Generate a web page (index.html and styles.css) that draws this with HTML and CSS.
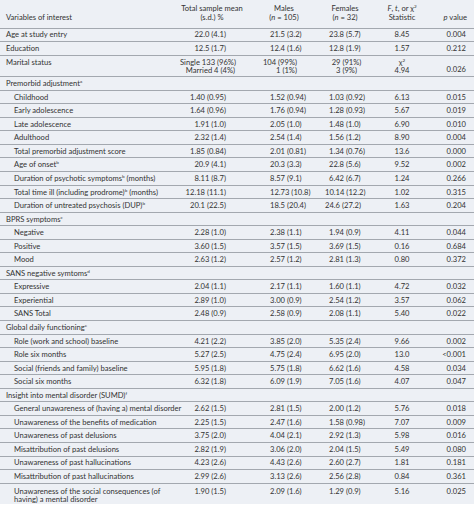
FILE: index.html
```html
<!DOCTYPE html>
<html>
<head>
<meta charset="utf-8">
<link rel="stylesheet" href="styles.css">
</head>
<body>
<table class="tbl">
<colgroup>
<col class="c1"><col class="c2"><col class="c3"><col class="c4"><col class="c5"><col class="c6">
</colgroup>
<thead>
<tr class="head">
<th class="lab">Variables of interest</th>
<th class="hc">Total sample mean<br>(s.d.) %</th>
<th class="hc">Males<br>(<i>n</i> = 105)</th>
<th class="hc">Females<br>(<i>n</i> = 32)</th>
<th class="hc"><i>F</i>, <i>t</i>, or χ<sup>2</sup><br>Statistic</th>
<th class="hp"><i>p</i> value</th>
</tr>
</thead>
<tbody>
<tr><td class="lab">Age at study entry</td><td class="tot">22.0 (4.1)</td><td class="mal">21.5 (3.2)</td><td class="fem">23.8 (5.7)</td><td class="st">8.45</td><td class="pv">0.004</td></tr>
<tr><td class="lab">Education</td><td class="tot">12.5 (1.7)</td><td class="mal">12.4 (1.6)</td><td class="fem">12.8 (1.9)</td><td class="st">1.57</td><td class="pv">0.212</td></tr>
<tr class="dbl"><td class="lab">Marital status</td><td class="tot mt">Single 133 (96%)<br>Married 4 (4%)</td><td class="mal mm">104 (99%)<br>1 (1%)</td><td class="fem mf">29 (91%)<br>3 (9%)</td><td class="st">χ<sup>2</sup><br>4.94</td><td class="pv bot">0.026</td></tr>
<tr><td class="lab">Premorbid adjustment<sup>a</sup></td><td></td><td></td><td></td><td></td><td></td></tr>
<tr><td class="sub">Childhood</td><td class="tot">1.40 (0.95)</td><td class="mal">1.52 (0.94)</td><td class="fem">1.03 (0.92)</td><td class="st">6.13</td><td class="pv">0.015</td></tr>
<tr><td class="sub">Early adolescence</td><td class="tot">1.64 (0.96)</td><td class="mal">1.76 (0.94)</td><td class="fem">1.28 (0.93)</td><td class="st">5.67</td><td class="pv">0.019</td></tr>
<tr><td class="sub">Late adolescence</td><td class="tot">1.91 (1.0)</td><td class="mal">2.05 (1.0)</td><td class="fem">1.48 (1.0)</td><td class="st">6.90</td><td class="pv">0.010</td></tr>
<tr><td class="sub">Adulthood</td><td class="tot">2.32 (1.4)</td><td class="mal">2.54 (1.4)</td><td class="fem">1.56 (1.2)</td><td class="st">8.90</td><td class="pv">0.004</td></tr>
<tr><td class="sub">Total premorbid adjustment score</td><td class="tot">1.85 (0.84)</td><td class="mal">2.01 (0.81)</td><td class="fem">1.34 (0.76)</td><td class="st">13.6</td><td class="pv">0.000</td></tr>
<tr><td class="sub">Age of onset<sup>b</sup></td><td class="tot">20.9 (4.1)</td><td class="mal">20.3 (3.3)</td><td class="fem">22.8 (5.6)</td><td class="st">9.52</td><td class="pv">0.002</td></tr>
<tr><td class="sub">Duration of psychotic symptoms<sup>b</sup> (months)</td><td class="tot">8.11 (8.7)</td><td class="mal">8.57 (9.1)</td><td class="fem">6.42 (6.7)</td><td class="st">1.24</td><td class="pv">0.266</td></tr>
<tr><td class="sub">Total time ill (including prodrome)<sup>b</sup> (months)</td><td class="tot">12.18 (11.1)</td><td class="mal">12.73 (10.8)</td><td class="fem w2">10.14 (12.2)</td><td class="st">1.02</td><td class="pv">0.315</td></tr>
<tr><td class="sub">Duration of untreated psychosis (DUP)<sup>b</sup></td><td class="tot">20.1 (22.5)</td><td class="mal">18.5 (20.4)</td><td class="fem w2">24.6 (27.2)</td><td class="st">1.63</td><td class="pv">0.204</td></tr>
<tr><td class="lab">BPRS symptoms<sup>c</sup></td><td></td><td></td><td></td><td></td><td></td></tr>
<tr><td class="sub">Negative</td><td class="tot">2.28 (1.0)</td><td class="mal">2.38 (1.1)</td><td class="fem">1.94 (0.9)</td><td class="st">4.11</td><td class="pv">0.044</td></tr>
<tr><td class="sub">Positive</td><td class="tot">3.60 (1.5)</td><td class="mal">3.57 (1.5)</td><td class="fem">3.69 (1.5)</td><td class="st">0.16</td><td class="pv">0.684</td></tr>
<tr><td class="sub">Mood</td><td class="tot">2.63 (1.2)</td><td class="mal">2.57 (1.2)</td><td class="fem">2.81 (1.3)</td><td class="st">0.80</td><td class="pv">0.372</td></tr>
<tr><td class="lab">SANS negative symtoms<sup>d</sup></td><td></td><td></td><td></td><td></td><td></td></tr>
<tr><td class="sub">Expressive</td><td class="tot">2.04 (1.1)</td><td class="mal">2.17 (1.1)</td><td class="fem">1.60 (1.1)</td><td class="st">4.72</td><td class="pv">0.032</td></tr>
<tr><td class="sub">Experiential</td><td class="tot">2.89 (1.0)</td><td class="mal">3.00 (0.9)</td><td class="fem">2.54 (1.2)</td><td class="st">3.57</td><td class="pv">0.062</td></tr>
<tr><td class="sub">SANS Total</td><td class="tot">2.48 (0.9)</td><td class="mal">2.58 (0.9)</td><td class="fem">2.08 (1.1)</td><td class="st">5.40</td><td class="pv">0.022</td></tr>
<tr><td class="lab">Global daily functioning<sup>e</sup></td><td></td><td></td><td></td><td></td><td></td></tr>
<tr><td class="sub">Role (work and school) baseline</td><td class="tot">4.21 (2.2)</td><td class="mal">3.85 (2.0)</td><td class="fem">5.35 (2.4)</td><td class="st">9.66</td><td class="pv">0.002</td></tr>
<tr><td class="sub">Role six months</td><td class="tot">5.27 (2.5)</td><td class="mal">4.75 (2.4)</td><td class="fem">6.95 (2.0)</td><td class="st">13.0</td><td class="pv">&lt;0.001</td></tr>
<tr><td class="sub">Social (friends and family) baseline</td><td class="tot">5.95 (1.8)</td><td class="mal">5.75 (1.8)</td><td class="fem">6.62 (1.6)</td><td class="st">4.58</td><td class="pv">0.034</td></tr>
<tr><td class="sub">Social six months</td><td class="tot">6.32 (1.8)</td><td class="mal">6.09 (1.9)</td><td class="fem">7.05 (1.6)</td><td class="st">4.07</td><td class="pv">0.047</td></tr>
<tr><td class="lab">Insight into mental disorder (SUMD)<sup>f</sup></td><td></td><td></td><td></td><td></td><td></td></tr>
<tr><td class="sub">General unawareness of (having a) mental disorder</td><td class="tot">2.62 (1.5)</td><td class="mal">2.81 (1.5)</td><td class="fem">2.00 (1.2)</td><td class="st">5.76</td><td class="pv">0.018</td></tr>
<tr><td class="sub">Unawareness of the benefits of medication</td><td class="tot">2.25 (1.5)</td><td class="mal">2.47 (1.6)</td><td class="fem">1.58 (0.98)</td><td class="st">7.07</td><td class="pv">0.009</td></tr>
<tr><td class="sub">Unawareness of past delusions</td><td class="tot">3.75 (2.0)</td><td class="mal">4.04 (2.1)</td><td class="fem">2.92 (1.3)</td><td class="st">5.98</td><td class="pv">0.016</td></tr>
<tr><td class="sub">Misattribution of past delusions</td><td class="tot">2.82 (1.9)</td><td class="mal">3.06 (2.0)</td><td class="fem">2.04 (1.5)</td><td class="st">5.49</td><td class="pv">0.080</td></tr>
<tr><td class="sub">Unawareness of past hallucinations</td><td class="tot">4.23 (2.6)</td><td class="mal">4.43 (2.6)</td><td class="fem">2.60 (2.7)</td><td class="st">1.81</td><td class="pv">0.181</td></tr>
<tr><td class="sub">Misattribution of past hallucinations</td><td class="tot">2.99 (2.6)</td><td class="mal">3.13 (2.6)</td><td class="fem">2.56 (2.8)</td><td class="st">0.84</td><td class="pv">0.361</td></tr>
<tr class="last"><td class="sub">Unawareness of the social consequences (of<br>having) a mental disorder</td><td class="tot">1.90 (1.5)</td><td class="mal">2.09 (1.6)</td><td class="fem">1.29 (0.9)</td><td class="st">5.16</td><td class="pv">0.025</td></tr>
</tbody>
</table>
</body>
</html>
```
FILE: styles.css
```css
html, body {
  margin: 0;
  padding: 0;
  background: #ffffff;
}
body {
  width: 474px;
  height: 506px;
  overflow: hidden;
  font-family: Lato, "Open Sans", "Liberation Sans", sans-serif;
  font-size: 7.6px;
  color: #333333;
}
.tbl {
  width: 474px;
  border-collapse: collapse;
  table-layout: fixed;
  background: #edf0f5;
}
.c1 { width: 180px; }
.c2 { width: 64px; }
.c3 { width: 80px; }
.c4 { width: 42px; }
.c5 { width: 72px; }
.c6 { width: 36px; }
th, td {
  padding: 0;
  font-weight: normal;
  white-space: nowrap;
  line-height: 8.6px;
  vertical-align: middle;
  border-bottom: 1px solid #a3a8af;
  border-top: 1px solid #fbfcfd;
}
tbody tr { height: 13.55px; }
.head th {
  height: 28px;
  vertical-align: bottom;
  padding-bottom: 6px;
  padding-top: 3px;
  border-top: none;
  box-sizing: border-box;
}
.head .lab { text-align: left; padding-left: 6px; }
.hc { text-align: center; }
.hp { text-align: right; padding-right: 7px; }
.lab { text-align: left; padding-left: 6px; }
.sub { text-align: left; padding-left: 14px; }
.tot { text-align: right; padding-right: 18px; }
.mal { text-align: left; padding-left: 26px; }
.fem { text-align: left; padding-left: 5px; }
.fem.w2 { padding-left: 1px; }
.st { text-align: center; }
.pv { text-align: right; padding-right: 8px; }
.dbl td { height: 21.6px; vertical-align: top; padding-top: 2px; box-sizing: border-box; }
.dbl td.bot { vertical-align: bottom; padding-top: 0; padding-bottom: 3px; }
.dbl .mt { padding-right: 9px; }
.dbl .mm { text-align: right; padding-left: 0; padding-right: 27px; }
.dbl .mf { text-align: center; padding-left: 3px; }
.last td { height: 18px; vertical-align: top; padding-top: 3px; border-bottom: none; box-sizing: border-box; }
sup {
  font-size: 4.6px;
  line-height: 0;
  vertical-align: 3px;
}
i { font-style: italic; }
```
